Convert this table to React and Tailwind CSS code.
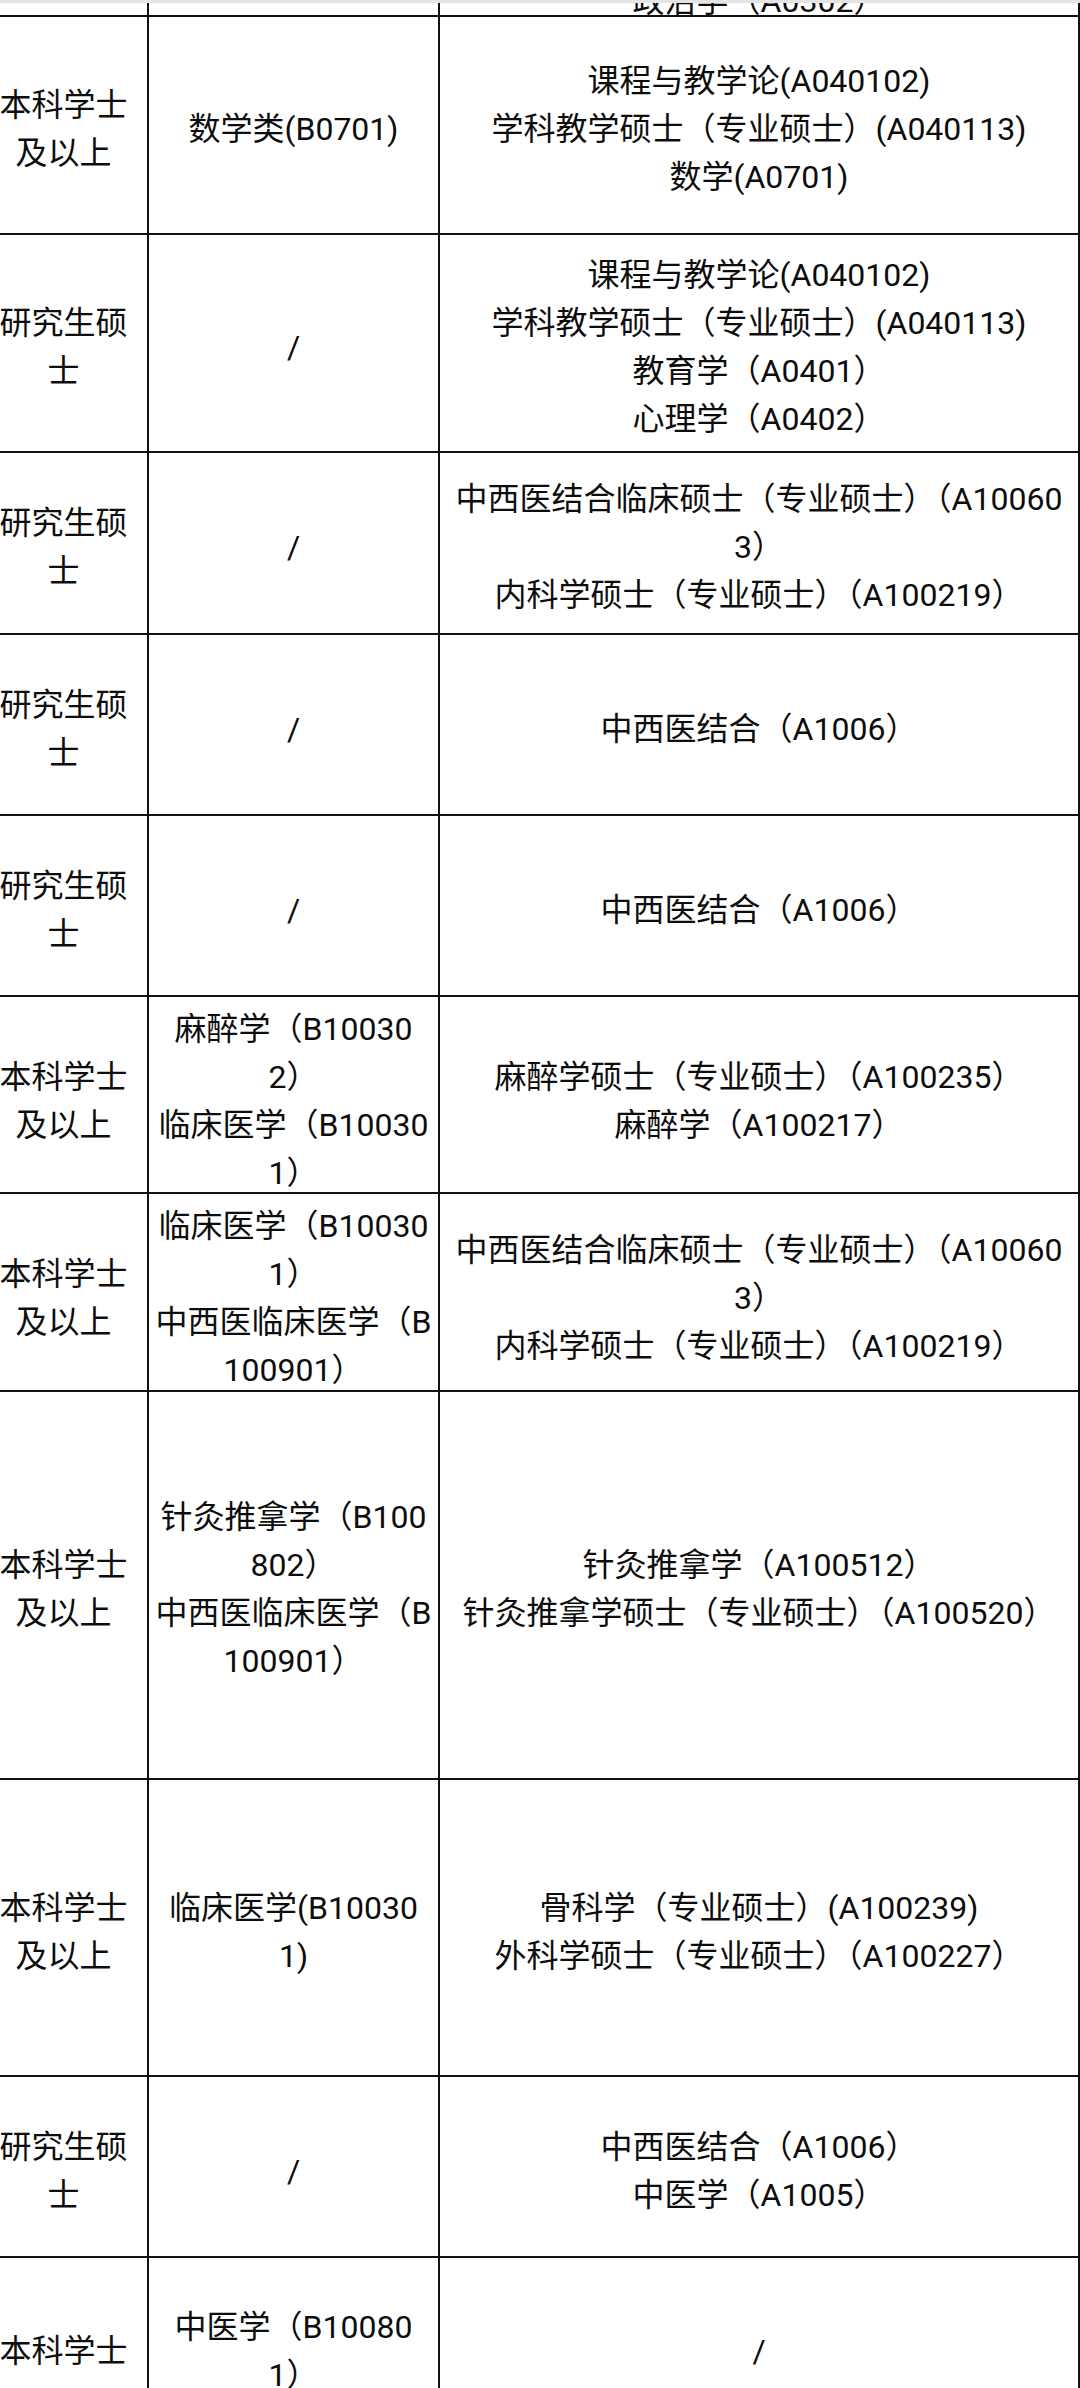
const rows = [
  {
    h: "h-[218px]",
    a: ["本科学士", "及以上"],
    b: ["数学类(B0701)"],
    c: ["课程与教学论(A040102)", "学科教学硕士（专业硕士）(A040113)", "数学(A0701)"],
  },
  {
    h: "h-[218px]",
    a: ["研究生硕", "士"],
    b: ["/"],
    c: ["课程与教学论(A040102)", "学科教学硕士（专业硕士）(A040113)", "教育学（A0401）", "心理学（A0402）"],
  },
  {
    h: "h-[182px]",
    a: ["研究生硕", "士"],
    b: ["/"],
    c: ["中西医结合临床硕士（专业硕士）（A10060", "3）", "内科学硕士（专业硕士）（A100219）"],
  },
  {
    h: "h-[181px]",
    a: ["研究生硕", "士"],
    b: ["/"],
    c: ["中西医结合（A1006）"],
  },
  {
    h: "h-[181px]",
    a: ["研究生硕", "士"],
    b: ["/"],
    c: ["中西医结合（A1006）"],
  },
  {
    h: "h-[197px]",
    a: ["本科学士", "及以上"],
    b: ["麻醉学（B10030", "2）", "临床医学（B10030", "1）"],
    c: ["麻醉学硕士（专业硕士）（A100235）", "麻醉学（A100217）"],
  },
  {
    h: "h-[198px]",
    a: ["本科学士", "及以上"],
    b: ["临床医学（B10030", "1）", "中西医临床医学（B", "100901）"],
    c: ["中西医结合临床硕士（专业硕士）（A10060", "3）", "内科学硕士（专业硕士）（A100219）"],
  },
  {
    h: "h-[388px]",
    a: ["本科学士", "及以上"],
    b: ["针灸推拿学（B100", "802）", "中西医临床医学（B", "100901）"],
    c: ["针灸推拿学（A100512）", "针灸推拿学硕士（专业硕士）（A100520）"],
  },
  {
    h: "h-[297px]",
    a: ["本科学士", "及以上"],
    b: ["临床医学(B10030", "1)"],
    c: ["骨科学（专业硕士）(A100239)", "外科学硕士（专业硕士）（A100227）"],
  },
  {
    h: "h-[181px]",
    a: ["研究生硕", "士"],
    b: ["/"],
    c: ["中西医结合（A1006）", "中医学（A1005）"],
  },
  {
    h: "h-[180px]",
    a: ["本科学士"],
    b: ["中医学（B10080", "1）"],
    c: ["/"],
  },
];

function Cell({ lines }) {
  return (
    <div className="flex flex-col items-center justify-center border-r-2 border-[#111] px-1 pt-[8px] text-center">
      {lines.map((line, i) => (
        <div key={i} className="whitespace-nowrap">
          {line}
        </div>
      ))}
    </div>
  );
}

export default function App() {
  return (
    <div
      className="w-[1080px] h-[2388px] overflow-hidden bg-white text-[32px] leading-[48px] text-[#0d0d0d]"
      style={{ fontFamily: 'Roboto, "Noto Sans CJK SC", sans-serif' }}
    >
      <div className="h-[3px] bg-[#e4e4e4]" />
      <div className="ml-[-22px] w-[1102px] border-l-2 border-[#111]">
        {/* row cut off by the scroll at the top */}
        <div className="grid h-[14px] grid-cols-[169px_291px_640px] overflow-hidden border-b-2 border-[#111]">
          <div className="border-r-2 border-[#111]" />
          <div className="border-r-2 border-[#111]" />
          <div className="flex justify-center border-r-2 border-[#111]">
            <div className="mt-[-26px] whitespace-nowrap">政治学（A0302）</div>
          </div>
        </div>
        {rows.map((r, i) => (
          <div
            key={i}
            className={`grid grid-cols-[169px_291px_640px] border-b-2 border-[#111] ${r.h}`}
          >
            <Cell lines={r.a} />
            <Cell lines={r.b} />
            <Cell lines={r.c} />
          </div>
        ))}
      </div>
    </div>
  );
}
